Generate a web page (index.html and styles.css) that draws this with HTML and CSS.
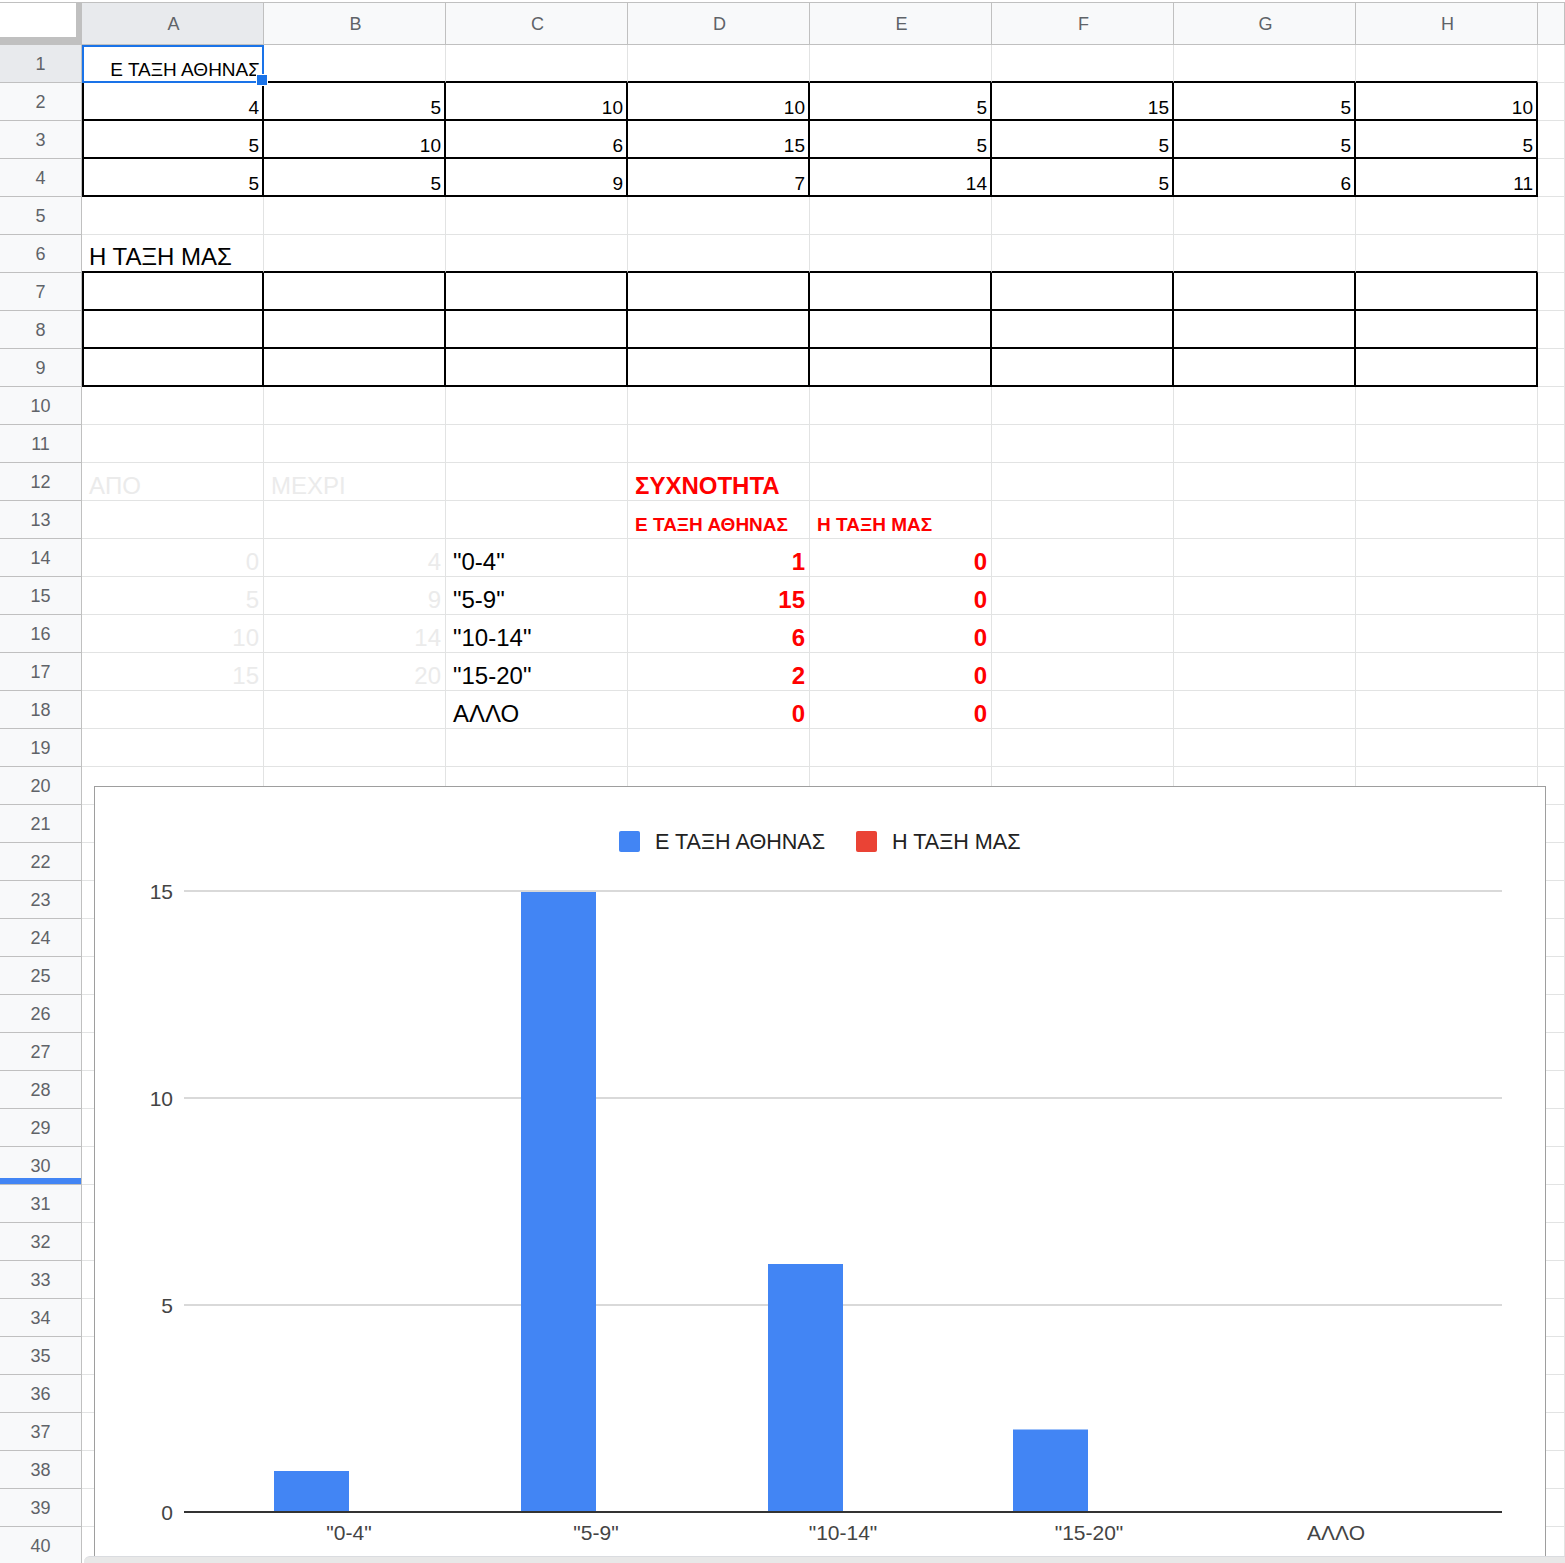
FILE: index.html
```html
<!DOCTYPE html>
<html lang="el">
<head>
    <meta charset="UTF-8">
    <meta name="viewport" content="width=device-width, initial-scale=1.0">
    <title>ΣΥΧΝΟΤΗΤΑ - Sheet</title>
    <link rel="stylesheet" href="styles.css">
</head>
<body>
    <div class="sheet">
        <div class="grid" id="grid"></div>

        <div class="chart">
            <svg class="chart-svg" width="1450" height="790" viewBox="0 0 1450 790">
                <!-- legend -->
                <rect x="524" y="44" width="21" height="21" rx="2" fill="#4285f4"/>
                <text class="legend" x="560" y="62">Ε ΤΑΞΗ ΑΘΗΝΑΣ</text>
                <rect x="761" y="44" width="21" height="21" rx="2" fill="#ea4335"/>
                <text class="legend" x="797" y="62">Η ΤΑΞΗ ΜΑΣ</text>

                <!-- grid lines -->
                <line class="gridline" x1="89" y1="104" x2="1407" y2="104"/>
                <line class="gridline" x1="89" y1="311" x2="1407" y2="311"/>
                <line class="gridline" x1="89" y1="518" x2="1407" y2="518"/>

                <text class="axis" x="78" y="111.5" text-anchor="end">15</text>
                <text class="axis" x="78" y="318.5" text-anchor="end">10</text>
                <text class="axis" x="78" y="525.5" text-anchor="end">5</text>
                <text class="axis" x="78" y="732.5" text-anchor="end">0</text>

                <!-- bars -->
                <rect class="bar" x="179" y="684" width="75" height="41"/>
                <rect class="bar" x="426" y="105" width="75" height="620"/>
                <rect class="bar" x="673" y="477" width="75" height="248"/>
                <rect class="bar" x="918" y="642.5" width="75" height="82.5"/>

                <line class="baseline" x1="89" y1="725" x2="1407" y2="725"/>

                <text class="axis" x="254" y="753" text-anchor="middle">"0-4"</text>
                <text class="axis" x="501" y="753" text-anchor="middle">"5-9"</text>
                <text class="axis" x="748" y="753" text-anchor="middle">"10-14"</text>
                <text class="axis" x="994" y="753" text-anchor="middle">"15-20"</text>
                <text class="axis" x="1241" y="753" text-anchor="middle">ΑΛΛΟ</text>
            </svg>
        </div>

        <div class="hscroll"></div>
    </div>

    <script>
        const grid = document.getElementById('grid');
        const cols = ['A', 'B', 'C', 'D', 'E', 'F', 'G', 'H'];

        const numbers = {
            2: [4, 5, 10, 10, 5, 15, 5, 10],
            3: [5, 10, 6, 15, 5, 5, 5, 5],
            4: [5, 5, 9, 7, 14, 5, 6, 11]
        };
        const ranges = [
            [0, 4, '"0-4"', 1, 0],
            [5, 9, '"5-9"', 15, 0],
            [10, 14, '"10-14"', 6, 0],
            [15, 20, '"15-20"', 2, 0]
        ];

        const cells = {};
        cells.A1 = { text: 'Ε ΤΑΞΗ ΑΘΗΝΑΣ', cls: 'r sel' };
        Object.entries(numbers).forEach(([r, vals]) => {
            vals.forEach((v, i) => cells[cols[i] + r] = { text: v, cls: 'r' });
        });
        cells.A6 = { text: 'Η ΤΑΞΗ ΜΑΣ', cls: 'big' };
        cells.A12 = { text: 'ΑΠΟ', cls: 'big faint' };
        cells.B12 = { text: 'ΜΕΧΡΙ', cls: 'big faint' };
        cells.D12 = { text: 'ΣΥΧΝΟΤΗΤΑ', cls: 'big red' };
        cells.D13 = { text: 'Ε ΤΑΞΗ ΑΘΗΝΑΣ', cls: 'sub red' };
        cells.E13 = { text: 'Η ΤΑΞΗ ΜΑΣ', cls: 'sub red' };
        ranges.forEach((rg, i) => {
            const r = 14 + i;
            cells['A' + r] = { text: rg[0], cls: 'big faint r' };
            cells['B' + r] = { text: rg[1], cls: 'big faint r' };
            cells['C' + r] = { text: rg[2], cls: 'big' };
            cells['D' + r] = { text: rg[3], cls: 'big red r' };
            cells['E' + r] = { text: rg[4], cls: 'big red r' };
        });
        cells.C18 = { text: 'ΑΛΛΟ', cls: 'big' };
        cells.D18 = { text: 0, cls: 'big red r' };
        cells.E18 = { text: 0, cls: 'big red r' };

        const boxed = [2, 3, 4, 7, 8, 9];
        const boxTop = [1, 6];

        function add(cls, text) {
            const el = document.createElement('div');
            el.className = cls;
            if (text !== undefined && text !== '') {
                const span = document.createElement('span');
                span.textContent = text;
                el.appendChild(span);
            }
            grid.appendChild(el);
            return el;
        }

        // column headers
        add('corner');
        cols.forEach(c => add('ch' + (c === 'A' ? ' on' : ''), c));
        add('ch');

        // rows
        for (let r = 1; r <= 40; r++) {
            let rh = 'rh';
            if (r === 1) rh += ' on';
            if (r === 30) rh += ' drag';
            add(rh, r);

            cols.forEach(c => {
                const cell = cells[c + r];
                let cls = 'c col-' + c.toLowerCase();
                if (boxed.includes(r)) cls += ' box';
                if (boxTop.includes(r)) cls += ' box-top';
                if (cell) cls += ' ' + cell.cls;
                add(cls, cell ? cell.text : '');
            });
            add('c');
        }
    </script>
</body>
</html>
```

FILE: styles.css
```css
:root {
    --header-bg: #f8f9fa;
    --header-line: #c0c0c0;
    --grid-line: #e2e3e3;
    --header-text: #5f6368;
    --select: #1a73e8;
    --red: #ff0000;
    --faint: #ebebeb;
}

* {
    margin: 0;
    padding: 0;
    box-sizing: border-box;
}

body {
    font-family: 'Liberation Sans', Arial, sans-serif;
    background-color: #fff;
    color: #000;
    overflow: hidden;
}

.sheet {
    position: relative;
    width: 1565px;
    height: 1563px;
    padding-top: 2px;
    overflow: hidden;
}

.grid {
    display: grid;
    grid-template-columns: 82px repeat(8, 182px) 1fr;
    grid-template-rows: 43px;
    grid-auto-rows: 38px;
}

/* headers */
.corner {
    background-color: #fff;
    border-top: 1px solid var(--header-line);
    border-right: 6px solid var(--header-line);
    border-bottom: 8px solid var(--header-line);
}

.ch,
.rh {
    background-color: var(--header-bg);
    color: var(--header-text);
    font-size: 18px;
    display: flex;
    align-items: center;
    justify-content: center;
    border-right: 1px solid var(--header-line);
    border-bottom: 1px solid var(--header-line);
}

.ch {
    border-top: 1px solid var(--header-line);
    padding: 2px 0 0 2px;
}

.rh {
    padding-top: 1px;
}

.ch.on,
.rh.on {
    background-color: #e8eaed;
}

.rh.drag {
    box-shadow: inset 0 -6px 0 #4285f4;
}

/* cells */
.c {
    display: flex;
    align-items: flex-end;
    padding: 0 4px 2px 7px;
    font-size: 19px;
    line-height: 1;
    white-space: nowrap;
    border-right: 1px solid var(--grid-line);
    border-bottom: 1px solid var(--grid-line);
}

.c.r {
    justify-content: flex-end;
}

.c.big {
    font-size: 24px;
}

.c.sub {
    font-size: 19px;
    padding-bottom: 4px;
}

.c.red {
    color: var(--red);
    font-weight: bold;
}

.c.faint {
    color: var(--faint);
}

.c.box {
    border-right: 2px solid #000;
    border-bottom: 2px solid #000;
    padding-right: 3px;
}

.c.box-top {
    border-bottom: 2px solid #000;
}

.c.box.col-a {
    box-shadow: inset 2px 0 0 #000;
}

.c.sel {
    position: relative;
    padding-right: 3px;
    outline: 2px solid var(--select);
    outline-offset: -2px;
}

.c.sel::after {
    content: "";
    position: absolute;
    right: -5px;
    bottom: -5px;
    width: 10px;
    height: 10px;
    background-color: var(--select);
    border: 1px solid #fff;
}

/* embedded chart */
.chart {
    position: absolute;
    left: 94px;
    top: 786px;
    width: 1452px;
    height: 790px;
    background-color: #fff;
    border: 1px solid #9e9e9e;
}

.chart-svg {
    display: block;
    font-family: 'Liberation Sans', Arial, sans-serif;
}

.legend {
    font-size: 21.6px;
    fill: #222;
}

.axis {
    font-size: 21px;
    fill: #444;
}

.gridline {
    stroke: #cccccc;
    stroke-width: 1.5;
}

.baseline {
    stroke: #333;
    stroke-width: 2;
}

.bar {
    fill: #4285f4;
}

.hscroll {
    position: absolute;
    left: 84px;
    right: 0;
    top: 1556px;
    height: 12px;
    background-color: #e8e8e8;
    border-top: 1px solid #dadce0;
    border-top-left-radius: 6px;
}
```
